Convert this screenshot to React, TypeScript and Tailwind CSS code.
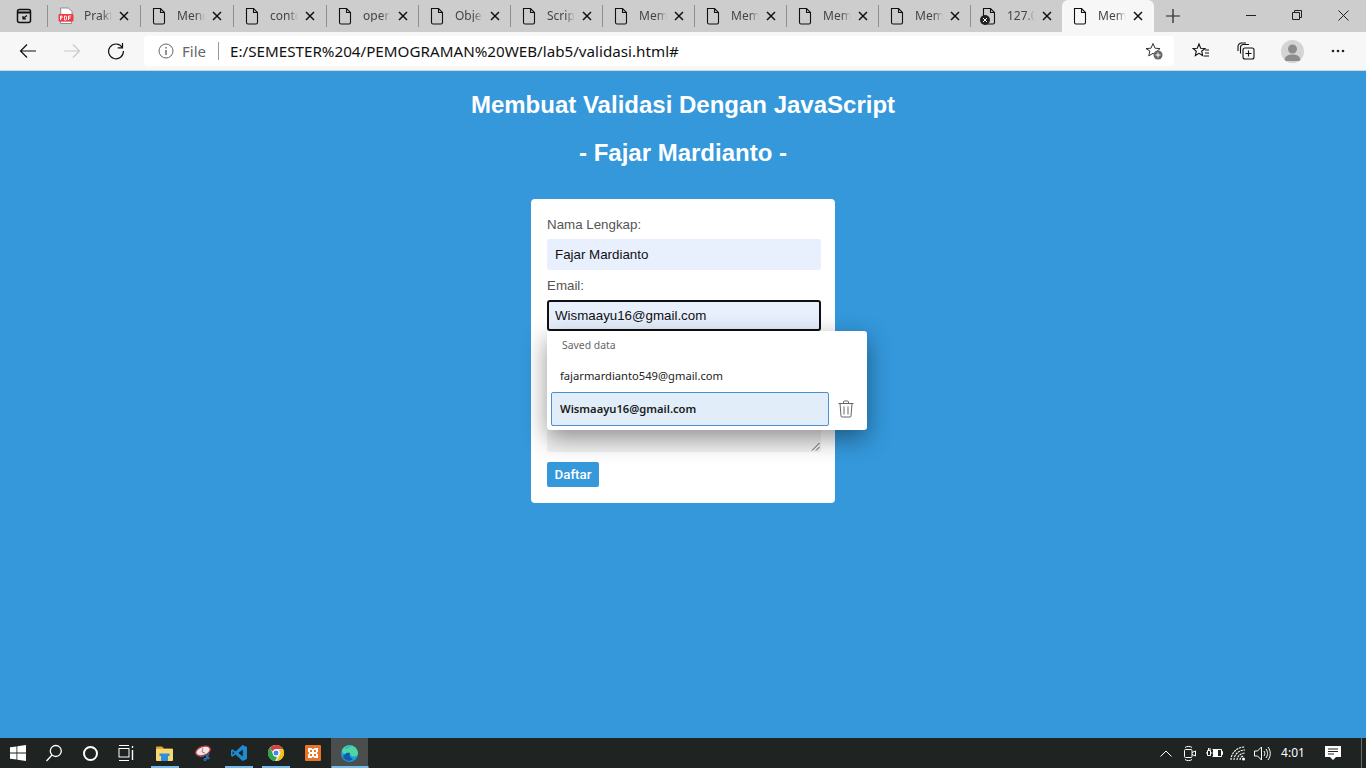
import type { ReactNode } from 'react';

const sans = "font-['Noto_Sans','Open_Sans',sans-serif]";

const tabs = [
  { title: 'Prakt', width: 'w-[93px]', icon: 'pdf' },
  { title: 'Meng', width: 'w-[93px]', icon: 'file' },
  { title: 'conto', width: 'w-[93px]', icon: 'file' },
  { title: 'opera', width: 'w-[92px]', icon: 'file' },
  { title: 'Objek', width: 'w-[92px]', icon: 'file' },
  { title: 'Scrip', width: 'w-[92px]', icon: 'file' },
  { title: 'Mem', width: 'w-[92px]', icon: 'file' },
  { title: 'Mem', width: 'w-[92px]', icon: 'file' },
  { title: 'Mem', width: 'w-[92px]', icon: 'file' },
  { title: 'Mem', width: 'w-[92px]', icon: 'file' },
  { title: '127.0', width: 'w-[92px]', icon: 'error' },
  { title: 'Mem', width: 'w-[92px]', icon: 'file', active: true },
];

function FileIcon() {
  return (
    <svg width="16" height="18" viewBox="0 0 16 18" fill="none" stroke="#111" strokeWidth="1.1">
      <path d="M2.500 1.500h7l4 4v10a1.500 1.500 0 0 1-1.500 1.500H4a1.500 1.500 0 0 1-1.500-1.500z" />
      <path d="M9.500 1.500v4h4" />
    </svg>
  );
}

function PdfIcon() {
  return (
    <svg width="16" height="18" viewBox="0 0 16 18">
      <path d="M2.500 1h8l3.500 3.500V8h-11z" fill="#fff" stroke="#777" strokeWidth="0.8" />
      <path d="M2.500 14h11v2.500h-11z" fill="#fff" stroke="#777" strokeWidth="0.8" />
      <rect x="0.500" y="7" width="15" height="7.500" rx="1" fill="#ee3f46" />
      <path d="M2.500 9v4M2.500 9h1.500v2H2.500M6.500 9v4h1a1 1 0 0 0 1-1v-2a1 1 0 0 0-1-1zM10.500 13V9h2.500M10.500 11h2" fill="none" stroke="#fff" strokeWidth="0.9" />
    </svg>
  );
}

function ErrorFileIcon() {
  return (
    <div className="relative h-[18px] w-4">
      <FileIcon />
      <span className="absolute bottom-0 left-[-1px] flex h-[10px] w-[10px] items-center justify-center rounded-full bg-[#222]">
        <svg width="6" height="6" viewBox="0 0 6 6" stroke="#fff" strokeWidth="1">
          <path d="M1 1l4 4M5 1l-4 4" />
        </svg>
      </span>
    </div>
  );
}

function CloseIcon() {
  return (
    <svg width="10" height="10" viewBox="0 0 10 10" stroke="#111" strokeWidth="1.5">
      <path d="M1 1l8 8M9 1l-8 8" />
    </svg>
  );
}

function Tab({ title, width, icon, active }: { title: string; width: string; icon: string; active?: boolean }) {
  return (
    <div
      className={`flex h-8 shrink-0 items-center pl-[10px] ${width} ${
        active ? 'rounded-t-[6px] bg-[#f7f7f7]' : 'border-l border-[#8f8f8f] [border-image:linear-gradient(to_bottom,transparent_19%,#8f8f8f_19%,#8f8f8f_81%,transparent_81%)_1]'
      }`}
    >
      <div className="flex w-4 shrink-0 justify-center">
        {icon === 'pdf' ? <PdfIcon /> : icon === 'error' ? <ErrorFileIcon /> : <FileIcon />}
      </div>
      <div className="ml-[10px] w-[28px] overflow-hidden whitespace-nowrap text-[12px] leading-none text-[#444] [mask-image:linear-gradient(to_right,black_65%,transparent)]">
        {title}
      </div>
      <div className="ml-[6px] flex w-[12px] justify-center">
        <CloseIcon />
      </div>
    </div>
  );
}

function TitleBar() {
  return (
    <div className={`flex h-8 items-start bg-[#cdcdcd] ${sans}`}>
      <div className="flex h-8 w-[47px] shrink-0 items-center justify-center">
        <svg width="16" height="16" viewBox="0 0 16 16" fill="none" stroke="#111">
          <rect x="1.500" y="1.500" width="13" height="13" rx="2" strokeWidth="1.500" />
          <path d="M1.500 4.500h13" strokeWidth="2" />
          <path d="M11 7.500l-4 3M7 8v2.800h3" strokeWidth="1.200" />
        </svg>
      </div>
      {tabs.map((tab, i) => (
        <Tab key={i} {...tab} />
      ))}
      <div className="flex h-8 w-[37px] shrink-0 items-center justify-center">
        <svg width="14" height="14" viewBox="0 0 14 14" stroke="#222" strokeWidth="1.200">
          <path d="M7 0v14M0 7h14" />
        </svg>
      </div>
      <div className="ml-auto flex h-8">
        <div className="flex h-[30px] w-[46px] items-center justify-center">
          <svg width="10" height="10" viewBox="0 0 10 10" stroke="#222">
            <path d="M0 5.500h10" />
          </svg>
        </div>
        <div className="flex h-[30px] w-[46px] items-center justify-center">
          <svg width="10" height="10" viewBox="0 0 10 10" fill="none" stroke="#222">
            <path d="M.500 2.500h7v7h-7zM2.500 2.500v-2h7v7h-2" />
          </svg>
        </div>
        <div className="flex h-[30px] w-[46px] items-center justify-center">
          <svg width="11" height="11" viewBox="0 0 11 11" stroke="#222">
            <path d="M.500.500l10 10M10.500.500l-10 10" />
          </svg>
        </div>
      </div>
    </div>
  );
}

function ToolButton({ children, className }: { children: ReactNode; className?: string }) {
  return <div className={`flex h-[30px] w-[44px] shrink-0 items-center justify-center ${className ?? ''}`}>{children}</div>;
}

function Toolbar() {
  return (
    <div className={`flex h-[39px] items-center border-b border-[#d5d5d5] bg-[#f7f7f7] pl-[6px] ${sans}`}>
      <ToolButton>
        <svg width="18" height="16" viewBox="0 0 18 16" fill="none" stroke="#111" strokeWidth="1.200">
          <path d="M17 8H1.500M8 1.500L1.500 8 8 14.500" />
        </svg>
      </ToolButton>
      <ToolButton>
        <svg width="18" height="16" viewBox="0 0 18 16" fill="none" stroke="#c8c8c8" strokeWidth="1.200">
          <path d="M1 8h15.500M10 1.500L16.500 8 10 14.500" />
        </svg>
      </ToolButton>
      <ToolButton>
        <svg width="18" height="18" viewBox="0 0 18 18" fill="none" stroke="#111" strokeWidth="1.200">
          <path d="M15.300 5.500A7.400 7.400 0 1 0 16.400 9" />
          <path d="M15.500 1v4.800h-4.800" />
        </svg>
      </ToolButton>
      <div className="ml-[6px] flex h-[30px] w-[1030px] shrink-0 items-center rounded-[4px] bg-white pl-[14px] pr-[11px]">
        <svg width="16" height="16" viewBox="0 0 16 16" fill="none" stroke="#666" strokeWidth="1">
          <circle cx="8" cy="8" r="7" />
          <path d="M8 7v5M8 4v1.500" strokeWidth="1.400" />
        </svg>
        <span className="ml-2 text-[15px] text-[#666]">File</span>
        <span className="ml-3 h-[18px] w-px bg-[#999]" />
        <span className="ml-[11px] text-[15.2px] text-[#111]">E:/SEMESTER%204/PEMOGRAMAN%20WEB/lab5/validasi.html#</span>
        <svg className="ml-auto" width="18" height="18" viewBox="0 0 18 18" fill="none">
          <path d="M8 1.500l2 4.700 5 .4-3.800 3.300 1.100 3.200-4.300-1.800-4.300 2.600 1.200-4.900L1 6.600l5-.4z" stroke="#333" strokeWidth="1" />
          <circle cx="13" cy="13" r="4.500" fill="#666" />
          <path d="M13 10.500v5M10.500 13h5" stroke="#fff" strokeWidth="1" />
        </svg>
      </div>
      <ToolButton className="ml-[5px]">
        <svg width="18" height="18" viewBox="0 0 18 18" fill="none" stroke="#111" strokeWidth="1.100">
          <path d="M7 2l1.700 4.200 4.300.3-3.300 2.800 1 4.200L7 11.300 3.300 13.500l1-4.200L1 6.500l4.300-.3z" />
          <path d="M13 8h4M13 11h4M12 14h5" />
        </svg>
      </ToolButton>
      <ToolButton className="ml-[1px]">
        <svg width="18" height="18" viewBox="0 0 18 18" fill="none" stroke="#111" strokeWidth="1.100">
          <path d="M3.500 11.500v-6a3 3 0 0 1 3-3h5.500" />
          <path d="M1 9V4.500A3.500 3.500 0 0 1 4.500 1H9" />
          <rect x="6" y="6" width="11" height="11" rx="2" />
          <path d="M11.500 8.500v6M8.500 11.500h6" />
        </svg>
      </ToolButton>
      <ToolButton className="ml-[2px]">
        <div className="relative flex h-[23px] w-[23px] items-center justify-center overflow-hidden rounded-full bg-[#d4d4d4]">
          <svg width="23" height="23" viewBox="0 0 23 23" fill="#8c8c8c">
            <circle cx="11.500" cy="9" r="4.500" />
            <path d="M3.500 21c0-5 3.500-6.500 8-6.500s8 1.500 8 6.500z" />
          </svg>
        </div>
      </ToolButton>
      <ToolButton className="ml-[2px]">
        <svg width="14" height="4" viewBox="0 0 14 4" fill="#222">
          <circle cx="2" cy="2" r="1.300" />
          <circle cx="7" cy="2" r="1.300" />
          <circle cx="12" cy="2" r="1.300" />
        </svg>
      </ToolButton>
    </div>
  );
}

function SavedDataMenu() {
  return (
    <div className={`absolute left-0 top-[31px] z-10 h-[99px] w-[320px] rounded-[3px] bg-white shadow-[0_8px_24px_rgba(0,0,0,0.42)] ${sans}`}>
      <div className="pl-[15px] pt-[6px] text-[10.4px] leading-[16px] text-[#666]">Saved data</div>
      <div className="mt-[11px] pl-[13px] text-[11.2px] leading-[24px] text-[#222]">fajarmardianto549@gmail.com</div>
      <div className="mt-1 flex items-center pl-1">
        <div className="flex h-[34px] w-[278px] items-center rounded-[2px] border border-[#4a90d0] bg-[#e1eef9] pl-2 pt-px text-[11.2px] font-semibold text-[#1a1a1a]">
          Wismaayu16@gmail.com
        </div>
        <svg className="ml-[9px]" width="16" height="18" viewBox="0 0 16 18" fill="none" stroke="#666" strokeWidth="1">
          <path d="M.500 3.500h15M5.500 3.500V2a1 1 0 0 1 1-1h3a1 1 0 0 1 1 1v1.500" />
          <path d="M2 3.500l1 12.500a1 1 0 0 0 1 1h8a1 1 0 0 0 1-1l1-12.500" />
          <path d="M6 6.500v8M10 6.500v8" />
        </svg>
      </div>
    </div>
  );
}

function RegisterForm() {
  return (
    <div className="mx-auto mt-8 h-[304px] w-[304px] rounded-[4px] bg-white py-4 pl-4 pr-[14px] font-['Liberation_Sans',sans-serif] text-[13.33px]">
      <div className="h-[24px] pt-[1px] leading-[18px] text-[#555]">Nama Lengkap:</div>
      <div className="flex h-[31px] items-center rounded-[2px] bg-[#e8f0fe] pl-2 text-[#111]">Fajar Mardianto</div>
      <div className="mt-[6px] h-[24px] pt-[1px] leading-[18px] text-[#555]">Email:</div>
      <div className="relative">
        <div className="box-border flex h-[31px] items-center rounded-[3px] border-2 border-[#101010] bg-[#e8f0fe] pl-[6px] text-[#111]">
          Wismaayu16@gmail.com
        </div>
        <SavedDataMenu />
      </div>
      <div className="relative mt-[71px] h-[50px] rounded-[2px] bg-[#f2f2f2]">
        <svg className="absolute bottom-[1px] right-[1px]" width="9" height="9" viewBox="0 0 9 9" stroke="#555">
          <path d="M8.500 1L1 8.500M8.500 5L5 8.500" />
        </svg>
      </div>
      <button className="mt-[10px] flex h-[25px] w-[52px] items-center justify-center rounded-[2px] bg-[#3498db] font-['Roboto',sans-serif] text-[13.33px] font-medium text-white">
        Daftar
      </button>
    </div>
  );
}

function TaskSlot({ children, active, line, className }: { children: ReactNode; active?: boolean; line?: boolean; className?: string }) {
  return (
    <div className={`relative flex h-[30px] shrink-0 items-center justify-center ${active ? 'bg-[#4a4f4e]' : ''} ${className ?? 'w-[37px]'}`}>
      {children}
      {line && <span className="absolute bottom-0 left-1/2 h-[2px] w-[28px] -translate-x-1/2 bg-[#76b9ed]" />}
    </div>
  );
}

function Taskbar() {
  return (
    <div className="flex h-[30px] items-center bg-[#1f2322]">
      <TaskSlot className="w-9">
        <svg width="16" height="16" viewBox="0 0 16 16" fill="#fff">
          <path d="M0 2.300l6.500-.9v6.200H0zM7.300 1.300L16 0v7.600H7.300zM0 8.400h6.500v6.200L0 13.700zM7.300 8.400H16V16l-8.700-1.300z" />
        </svg>
      </TaskSlot>
      <TaskSlot className="w-9">
        <svg width="18" height="18" viewBox="0 0 18 18" fill="none" stroke="#fff" strokeWidth="1.300">
          <circle cx="10.800" cy="7" r="5.500" />
          <path d="M7 11l-5.500 6" />
        </svg>
      </TaskSlot>
      <TaskSlot className="w-9">
        <div className="h-[15px] w-[15px] rounded-full border-[2px] border-white" />
      </TaskSlot>
      <TaskSlot className="w-9">
        <svg width="16" height="16" viewBox="0 0 16 16" fill="none" stroke="#fff" strokeWidth="1">
          <path d="M1 .500h10M1 15.500h10" />
          <rect x="1" y="3.500" width="10" height="8.500" />
          <path d="M14.500 1v2M14.500 5v10" strokeWidth="1.400" />
        </svg>
      </TaskSlot>
      <div className="w-[2px] shrink-0" />
      <TaskSlot line>
        <svg width="17" height="15" viewBox="0 0 17 15">
          <path d="M0 1.500a1 1 0 0 1 1-1h5l2 2h8a1 1 0 0 1 1 1V5H0z" fill="#e8a92a" />
          <rect y="3" width="17" height="12" rx="1" fill="#f8d775" />
          <rect x="5" y="9" width="7" height="6" fill="#2f8fd8" />
          <rect x="3.500" y="7.500" width="10" height="2.500" fill="#2f8fd8" />
        </svg>
      </TaskSlot>
      <TaskSlot>
        <svg className="ml-[4px]" width="17" height="16" viewBox="0 0 17 16">
          <ellipse cx="8" cy="6" rx="7.500" ry="4.500" transform="rotate(-20 8 6)" fill="#f2e6e6" stroke="#b8383c" strokeWidth="1.300" />
          <path d="M8 3l-1 4M7 7l3 1" stroke="#777" strokeWidth="0.800" fill="none" />
          <path d="M3 10c2 2 4 2 6 1" fill="none" stroke="#8a5a5a" strokeWidth="1" />
          <path d="M10 9l2 2.500M14 8.500l-3 5M10 13.500a1 1 0 1 0 .1 0zM13 12a1 1 0 1 0 .1 0z" fill="none" stroke="#2a78c4" strokeWidth="1.100" />
        </svg>
      </TaskSlot>
      <TaskSlot line>
        <svg width="16" height="16" viewBox="0 0 16 16">
          <path d="M11.500 0L16 2.100v11.800L11.500 16 4.500 9.500 1.600 11.700 0 10.900V5.100l1.600-.8 2.900 2.200z" fill="#1f8ad2" />
          <path d="M11.800 4.400L7.300 8l4.500 3.600z" fill="#1f2322" />
          <path d="M1.600 6.300v3.400L3.400 8z" fill="#1f2322" />
        </svg>
      </TaskSlot>
      <TaskSlot line>
        <svg width="16" height="16" viewBox="0 0 16 16">
          <circle cx="8" cy="8" r="8" fill="#e8e8e8" />
          <path d="M8 0a8 8 0 0 1 7 4H8a4 4 0 0 0-3.700 2.500L1.800 3A8 8 0 0 1 8 0z" fill="#d9423a" />
          <path d="M15 4a8 8 0 0 1-6.500 12l3-5.500A4 4 0 0 0 11 5z" fill="#f4c20d" />
          <path d="M1.800 3l3 5.300A4 4 0 0 0 9 12l-2 4A8 8 0 0 1 1.800 3z" fill="#2da44e" />
          <circle cx="8" cy="8" r="3" fill="#4285f4" stroke="#fff" strokeWidth="1" />
        </svg>
      </TaskSlot>
      <TaskSlot>
        <svg width="16" height="16" viewBox="0 0 16 16">
          <rect width="16" height="16" rx="1" fill="#e8742a" />
          <path d="M3 3h3.500l1.500 1.500L9.500 3H13v3.500L11.500 8 13 9.500V13H9.500L8 11.500 6.500 13H3V9.500L4.500 8 3 6.500z" fill="#fff" />
          <rect x="5" y="5" width="2" height="2" fill="#e8742a" />
          <rect x="9" y="5" width="2" height="2" fill="#e8742a" />
          <rect x="5" y="9" width="2" height="2" fill="#e8742a" />
          <rect x="9" y="9" width="2" height="2" fill="#e8742a" />
        </svg>
      </TaskSlot>
      <TaskSlot active line className="w-[37px] [&>span]:w-full">
        <svg width="17" height="17" viewBox="0 0 17 17">
          <circle cx="8.500" cy="8.500" r="8.500" fill="#1b9de2" />
          <path d="M1 5C3 1 7 0 10 .500c4 .700 7 3.500 7 8 0 2-2 3-4 3-3 0-4-1.500-4-3-1-1-3-1-4 0C2.500 10 1 8 1 5z" fill="#4fd6a0" />
          <path d="M4 3.500C6 1 10 .500 12 2c-2-.500-5 0-6 2z" fill="#2aa8e0" />
          <path d="M2 12c1-3 4-5 7-4-1 2 0 5 3 6-3 3-8 2-10-2z" fill="#0e5ba8" />
        </svg>
      </TaskSlot>
      <div className={`ml-auto flex items-center text-white ${sans}`}>
        <div className="flex w-6 justify-center">
          <svg width="12" height="7" viewBox="0 0 12 7" fill="none" stroke="#fff" strokeWidth="1">
            <path d="M.500 6.500L6 1l5.500 5.500" />
          </svg>
        </div>
        <div className="flex w-6 justify-center">
          <svg width="12" height="17" viewBox="0 0 12 17" fill="none" stroke="#fff" strokeWidth="1">
            <rect x="0.500" y="4.500" width="7.500" height="8" rx="1" />
            <path d="M8 7.500l3.500-1.500v5L8 9.500M1 2.500c2-1.500 5-1.500 7 0M1 14.500c2 1.500 5 1.500 7 0" />
          </svg>
        </div>
        <div className="flex w-6 justify-center">
          <svg width="17" height="12" viewBox="0 0 17 12" fill="none" stroke="#fff" strokeWidth="1">
            <path d="M6.500 2.500h9v7h-9M15.500 4.500h1v3h-1" />
            <path d="M7 3h5v6H7z" fill="#fff" stroke="none" />
            <path d="M0 6h1.500M1.500 3.500h3v5h-3zM2.500 3.500V1M4 3.500V1M4.500 6h2" />
          </svg>
        </div>
        <div className="flex w-6 justify-center">
          <svg width="17" height="15" viewBox="0 0 17 15" fill="none" stroke="#fff" strokeWidth="1.100">
            <path d="M1 14C1 7 7 1 15 1M4 14c0-5 4.500-10 11-10M7 14c0-3 3-7 8-7M10 14c0-2 1.500-4 4-4" strokeDasharray="2.200 0.800" />
            <circle cx="13.500" cy="13" r="1.500" fill="#fff" stroke="none" />
          </svg>
        </div>
        <div className="flex w-6 justify-center">
          <svg width="17" height="15" viewBox="0 0 17 15" fill="none" stroke="#fff" strokeWidth="1">
            <path d="M.500 5h3l4-4v13l-4-4h-3z" />
            <path d="M10 5c1 1.500 1 3.500 0 5M12 3c2 2.500 2 6.500 0 9M14 1c3 4 3 9 0 13" />
          </svg>
        </div>
        <div className="ml-[2px] w-[34px] text-center text-[12px] leading-none">4:01</div>
        <div className="ml-[3px] flex w-[40px] justify-center">
          <svg width="16" height="16" viewBox="0 0 16 16">
            <path d="M0 1h16v11h-5l-3 3-3-3H0z" fill="#fff" />
            <path d="M3 4h10M3 6.500h10M3 9h6" stroke="#1f2322" strokeWidth="1" />
          </svg>
        </div>
        <div className="ml-2 h-[30px] w-[5px] border-l border-[#6a6d6c]" />
      </div>
    </div>
  );
}

export default function App() {
  return (
    <div className="flex h-screen flex-col overflow-hidden bg-[#3498db]">
      <TitleBar />
      <Toolbar />
      <main className="min-h-0 flex-1">
        <h1 className="mt-[20px] text-center font-['Liberation_Sans',sans-serif] text-[24px] font-bold leading-[28px] text-white">
          Membuat Validasi Dengan JavaScript
        </h1>
        <h1 className="mt-[20px] text-center font-['Liberation_Sans',sans-serif] text-[24px] font-bold leading-[28px] text-white">
          - Fajar Mardianto -
        </h1>
        <RegisterForm />
      </main>
      <Taskbar />
    </div>
  );
}
